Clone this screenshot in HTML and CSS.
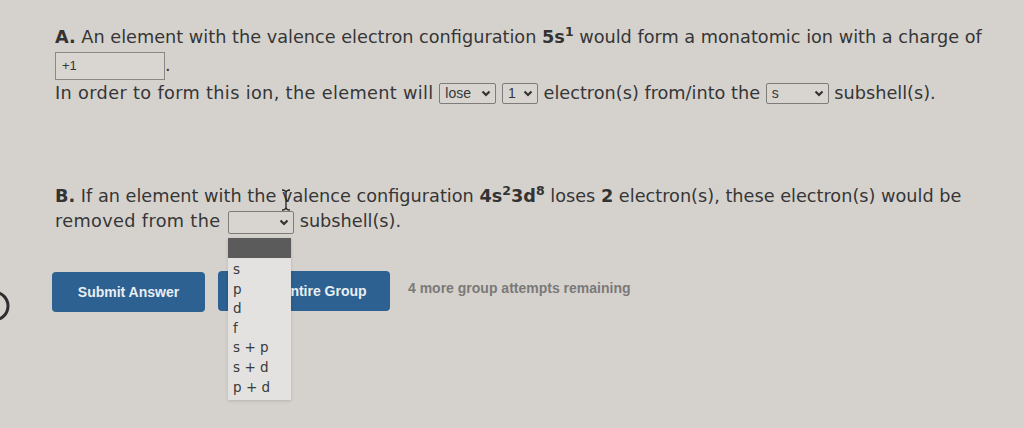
FILE: index.html
```html
<!DOCTYPE html>
<html lang="en">
<head>
    <meta charset="UTF-8">
    <meta name="viewport" content="width=device-width, initial-scale=1.0">
    <title>Electron configuration</title>
    <link rel="stylesheet" href="styles.css">
</head>
<body>
    <svg class="edge-circle" width="12" height="40" viewBox="0 0 12 40">
        <circle cx="-6" cy="20" r="14" fill="none" stroke="#2e2e2e" stroke-width="3"/>
    </svg>
    <div class="container">
        <p class="question part-a">
            <b>A.</b> An element with the valence electron configuration <b>5s<sup>1</sup></b> would form a monatomic ion with a charge of<br>
            <span class="answer-box">+1</span>.<br>
            <span class="wide">In order to form this ion, the element will</span>
            <span class="pick pick-lose">lose<svg class="chev" width="10" height="7" viewBox="0 0 10 7"><path d="M1.5 1.5 L5 5 L8.5 1.5" fill="none" stroke="#333" stroke-width="2.2"/></svg></span>
            <span class="pick pick-num">1<svg class="chev" width="10" height="7" viewBox="0 0 10 7"><path d="M1.5 1.5 L5 5 L8.5 1.5" fill="none" stroke="#333" stroke-width="2.2"/></svg></span>
            electron(s) from/into the
            <span class="pick pick-shell">s<svg class="chev" width="10" height="7" viewBox="0 0 10 7"><path d="M1.5 1.5 L5 5 L8.5 1.5" fill="none" stroke="#333" stroke-width="2.2"/></svg></span>
            subshell(s).
        </p>

        <p class="question part-b">
            <b>B.</b> If an element with the <span class="cursor-spot">v<svg class="ibeam" width="10" height="22" viewBox="0 0 10 22"><path d="M1 1 Q5 1 5 4 L5 18 Q5 21 1 21 M9 1 Q5 1 5 4 M5 18 Q5 21 9 21" fill="none" stroke="#222" stroke-width="1.3"/></svg></span>alence configuration <b>4s<sup>2</sup>3d<sup>8</sup></b> loses <b>2</b> electron(s), these electron(s) would be<br>
            <span class="wide">removed from the</span>
            <span class="pick pick-open"><svg class="chev" width="10" height="7" viewBox="0 0 10 7"><path d="M1.5 1.5 L5 5 L8.5 1.5" fill="none" stroke="#333" stroke-width="2.2"/></svg>
                <span class="options">
                    <span class="option selected"></span>
                    <span class="option">s</span>
                    <span class="option">p</span>
                    <span class="option">d</span>
                    <span class="option">f</span>
                    <span class="option">s + p</span>
                    <span class="option">s + d</span>
                    <span class="option">p + d</span>
                </span>
            </span>
            subshell(s).
        </p>

        <div class="actions">
            <button class="btn btn-submit">Submit Answer</button>
            <button class="btn btn-retry">Retry Entire Group</button>
            <span class="attempts">4 more group attempts remaining</span>
        </div>
    </div>
</body>
</html>
```

FILE: styles.css
```css
body {
    margin: 0;
    background-color: #d5d2ce;
    color: #363636;
    font-family: "DejaVu Sans", Verdana, sans-serif;
    height: 428px;
    overflow: hidden;
    position: relative;
}

.container {
    padding: 25px 0 0 55px;
}

.question {
    margin: 0;
    font-size: 17.7px;
    line-height: 25px;
    white-space: nowrap;
}

.question b {
    font-weight: bold;
    color: #333;
}

.question sup {
    font-size: 12.5px;
    line-height: 0;
}

.wide {
    letter-spacing: 0.35px;
}

.part-b {
    margin-top: 78px;
}

.answer-box {
    display: inline-block;
    box-sizing: border-box;
    width: 110px;
    height: 28px;
    margin: 2px 0 1px;
    padding: 0 6px;
    border: 1px solid #8a8886;
    background-color: #d9d6d2;
    font-family: "Liberation Sans", Arial, sans-serif;
    font-size: 13px;
    line-height: 26px;
    vertical-align: middle;
}

.pick {
    display: inline-flex;
    align-items: center;
    justify-content: space-between;
    box-sizing: border-box;
    height: 21px;
    padding: 0 4px 0 5px;
    border: 1px solid #7e7c7a;
    border-radius: 2px;
    background-color: #d8d5d1;
    font-family: "Liberation Sans", Arial, sans-serif;
    font-size: 14px;
    vertical-align: 1px;
}

.pick-lose {
    width: 57px;
}

.pick-num {
    width: 36px;
}

.pick-shell {
    width: 63px;
}

.pick-open {
    position: relative;
    width: 66px;
    height: 23px;
    margin-left: 2px;
    justify-content: flex-end;
    vertical-align: 1px;
}

.chev {
    margin-left: 4px;
}

.options {
    position: absolute;
    top: 26px;
    left: -1px;
    width: 63px;
    padding-bottom: 3px;
    background-color: #e3e2e0;
    box-shadow: 0 1px 3px rgba(0, 0, 0, 0.15);
    display: flex;
    flex-direction: column;
    z-index: 2;
}

.option {
    height: 19.6px;
    padding-left: 5px;
    font-family: "DejaVu Sans", Verdana, sans-serif;
    font-size: 13.5px;
    line-height: 19.6px;
    color: #3a3a3a;
}

.option.selected {
    height: 20px;
    margin-bottom: 2px;
    background-color: #5b5b5b;
}

.cursor-spot {
    position: relative;
}

.ibeam {
    position: absolute;
    left: -1px;
    top: 3px;
}

.actions {
    display: flex;
    align-items: center;
    margin-top: 38px;
    margin-left: -3px;
}

.btn {
    height: 40px;
    border: none;
    border-radius: 4px;
    background-color: #2c6191;
    color: #e9eef3;
    font-family: "Liberation Sans", Arial, sans-serif;
    font-size: 14px;
    font-weight: bold;
    cursor: pointer;
}

.btn-submit {
    width: 153px;
}

.btn-retry {
    width: 172px;
    margin-left: 13px;
    margin-top: -3px;
    padding-left: 6px;
}

.attempts {
    margin-left: 18px;
    margin-top: -9px;
    font-family: "Liberation Sans", Arial, sans-serif;
    font-size: 14px;
    font-weight: bold;
    color: #7b7977;
}

.edge-circle {
    position: absolute;
    left: 0;
    top: 286px;
}
```
